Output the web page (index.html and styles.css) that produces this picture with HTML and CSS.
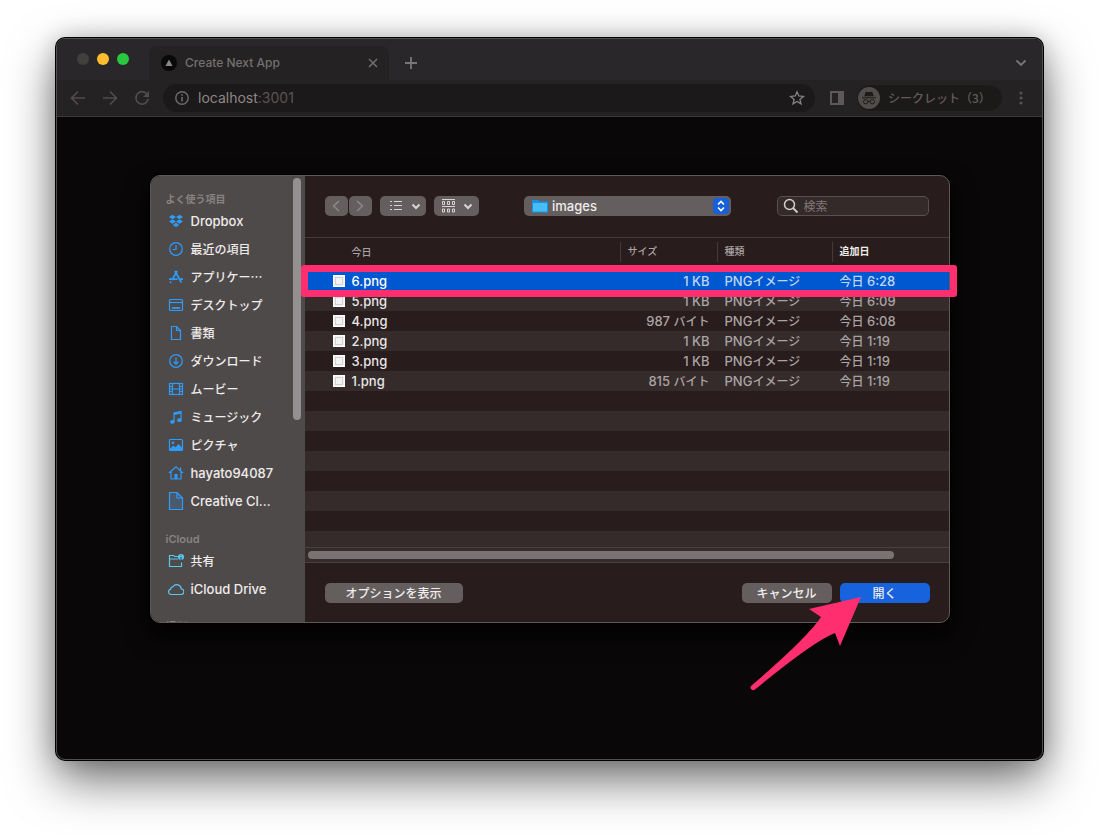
FILE: index.html
```
<!DOCTYPE html>
<html lang="ja">
<head>
<meta charset="utf-8">
<title>Create Next App</title>
<link rel="stylesheet" href="styles.css">
</head>
<body>
<div class="window">
  <header class="tabs">
    <div class="lights"><span class="light"></span><span class="light light-yellow"></span><span class="light light-green"></span></div>
    <div class="tab">
      <svg class="favicon" viewBox="0 0 16 16"><circle cx="8" cy="8" r="8" fill="#0a0909"/><path d="M8 4.500 11.500 11h-7z" fill="#8b8787"/></svg>
      <span class="tab-title">Create Next App</span>
      <button class="plain tab-close" aria-label="閉じる"><svg width="10" height="10" viewBox="0 0 10 10"><path d="M1 1l8 8M9 1 1 9" stroke="#757070" stroke-width="1.500"/></svg></button>
    </div>
    <button class="plain tab-new" aria-label="新しいタブ"><svg width="14" height="14" viewBox="0 0 14 14"><path d="M7 1v12M1 7h12" stroke="#7b7676" stroke-width="1.800"/></svg></button>
    <button class="plain tab-search" aria-label="タブを検索"><svg width="12" height="8" viewBox="0 0 12 8"><path d="M1.500 1.500 6 6l4.500-4.500" fill="none" stroke="#7b7676" stroke-width="1.800"/></svg></button>
  </header>
  <nav class="toolbar">
    <button class="plain tool" aria-label="戻る"><svg width="16" height="16" viewBox="0 0 16 16"><path d="M15 8H2M8 1.500 1.500 8 8 14.500" fill="none" stroke="#544b4b" stroke-width="1.700"/></svg></button>
    <button class="plain tool" aria-label="進む"><svg width="16" height="16" viewBox="0 0 16 16"><path d="M1 8h13M8 1.500 14.500 8 8 14.500" fill="none" stroke="#544b4b" stroke-width="1.700"/></svg></button>
    <button class="plain tool" aria-label="再読み込み"><svg width="16" height="16" viewBox="0 0 16 16"><path d="M13.300 4.500A6.200 6.200 0 1 0 14.200 9" fill="none" stroke="#544b4b" stroke-width="1.700"/><path d="M15 1v6H9z" fill="#544b4b"/></svg></button>
    <div class="address">
      <svg width="14" height="14" viewBox="0 0 14 14"><circle cx="7" cy="7" r="6.200" fill="none" stroke="#706b6b" stroke-width="1.400"/><path d="M7 6v4.500M7 3.300v1.500" stroke="#706b6b" stroke-width="1.600"/></svg>
      <span class="url">localhost<span class="port">:3001</span></span>
      <button class="plain star" aria-label="ブックマーク"><svg width="16" height="16" viewBox="0 0 16 16"><path d="M8 1.800l1.800 4.200 4.600.4-3.500 3 1.100 4.500L8 11.500l-4 2.400 1.100-4.500-3.500-3 4.600-.4z" fill="none" stroke="#8b8282" stroke-width="1.300"/></svg></button>
    </div>
    <button class="plain tool panel" aria-label="サイドパネル"><svg width="16" height="14" viewBox="0 0 16 14"><path d="M1 0h14v14H1zM3 2v10h6V2z" fill="#5e5959" fill-rule="evenodd"/></svg></button>
    <button class="incognito">
      <svg width="22" height="22" viewBox="0 0 22 22"><circle cx="11" cy="11" r="11" fill="#504d4a"/><path d="M7.500 5.200 8.300 4.800 11 5.300l2.700-.5.8.400 1.200 4H6.300zM4 10.300h14v1H4z" fill="#1d1a1a"/><g fill="none" stroke="#1d1a1a"><circle cx="7.700" cy="14.700" r="2.200"/><circle cx="14.300" cy="14.700" r="2.200"/><path d="M9.900 14.500q1.100-.6 2.200 0"/></g></svg>
      <span class="ja">シークレット（3）</span>
    </button>
    <button class="plain more" aria-label="メニュー"><svg width="4" height="14" viewBox="0 0 4 14" fill="#5a5151"><circle cx="2" cy="2" r="1.600"/><circle cx="2" cy="7" r="1.600"/><circle cx="2" cy="12" r="1.600"/></svg></button>
  </nav>
  <main class="page">
    <div class="dialog-wrap">
    <section class="dialog">
      <aside class="sidebar">
        <h2 class="heading">よく使う項目</h2>
        <a class="place" href="#"><svg viewBox="0 0 16 16"><path d="M4.500 1.800 8 4 4.500 6.300 1 4zM11.500 1.800 15 4l-3.500 2.300L8 4zM4.500 6.300 8 8.500l-3.500 2.300L1 8.500zM11.500 6.300 15 8.500l-3.500 2.300L8 8.500zM8 9.700l3.300 2.200L8 14l-3.300-2.100z" fill="#2d9cff"/></svg>Dropbox</a>
        <a class="place ja" href="#"><svg viewBox="0 0 16 16"><circle cx="8" cy="8" r="6.300"/><path d="M8 4v4.500H4.500"/></svg>最近の項目</a>
        <a class="place ja" href="#"><svg viewBox="0 0 16 16"><path d="M9.200 2 4 11.200M6.800 2l6.600 11.700M1 10.200h8.500M12 10.200h3M3 12.500l-.8 1.400" stroke-width="1.700"/></svg>アプリケー…</a>
        <a class="place ja" href="#"><svg viewBox="0 0 16 16"><rect x="1.500" y="2.500" width="13" height="11" rx="1"/><path d="M2 5.500h12"/><path d="M4 11h8" stroke-width="1.800"/></svg>デスクトップ</a>
        <a class="place ja" href="#"><svg viewBox="0 0 16 16"><path d="M3.500 1.500h5l4 4v9h-9zM8.500 1.500v4h4"/></svg>書類</a>
        <a class="place ja" href="#"><svg viewBox="0 0 16 16"><circle cx="8" cy="8" r="6.300"/><path d="M8 4.500v6.500M5.500 8.700 8 11.200l2.500-2.500"/></svg>ダウンロード</a>
        <a class="place ja" href="#"><svg viewBox="0 0 16 16"><rect x="1.500" y="2.500" width="13" height="11"/><path d="M4.500 2.500v11M11.500 2.500v11M4.500 8h7M1.500 5.500h3M1.500 8h3M1.500 10.500h3M11.500 5.500h3M11.500 8h3M11.500 10.500h3"/></svg>ムービー</a>
        <a class="place ja" href="#"><svg viewBox="0 0 16 16"><path d="M6 12.500V4l7-1.500v8.500"/><path d="M6 5l7-1.500" stroke-width="2.200"/><g fill="#2d9cff" stroke="none"><ellipse cx="4.400" cy="12.800" rx="2.300" ry="1.900"/><ellipse cx="11.400" cy="11.200" rx="2.300" ry="1.900"/></g></svg>ミュージック</a>
        <a class="place ja" href="#"><svg viewBox="0 0 16 16"><rect x="1.500" y="2.500" width="13" height="11" rx="1"/><path d="M2 11.500l3.500-3 2 1.800 3-3.300L14 10.500V13H2z" fill="#2d9cff" stroke="none"/><circle cx="5" cy="5.800" r="1.400" fill="#2d9cff" stroke="none"/></svg>ピクチャ</a>
        <a class="place" href="#"><svg viewBox="0 0 16 16"><path d="M1 8 8 1.800 15 8M3 7v7h10V7M12.500 2.500v3"/><path d="M6.500 9h3v5h-3z" fill="#2d9cff"/></svg>hayato94087</a>
        <a class="place" href="#"><svg class="tall" viewBox="0 0 16 18"><path d="M1.500.5H9L14.500 6v11.500h-13z" fill="#4a5a6d"/><path d="M9 .5V6h5.500"/></svg>Creative Cl...</a>
        <h2 class="heading heading-next">iCloud</h2>
        <a class="place ja cyan" href="#"><svg viewBox="0 0 16 16"><path d="M10 3.500H7L5.500 2.500h-4v11h12v-4M1.500 6h8.500"/><circle cx="13" cy="4" r="3" fill="#58c8f0" stroke="none"/><path d="M13 2.500v.8M13 4v3.500" stroke="#35566a"/></svg>共有</a>
        <a class="place cyan" href="#"><svg viewBox="0 0 16 16"><path d="M3.500 13.500H13a2.700 2.700 0 0 0 .3-5.500A4.500 4.500 0 0 0 5 5.800 2.400 2.400 0 0 0 2.600 8.200 2.700 2.700 0 0 0 3.500 13.500z"/></svg>iCloud Drive</a>
        <h2 class="heading heading-next">場所</h2>
        <span class="side-thumb"></span>
      </aside>
      <div class="browser">
        <div class="controls">
          <div class="control-group">
            <div class="arrows">
              <button class="push arrow-btn" aria-label="前"><svg width="8" height="12" viewBox="0 0 8 12"><path d="M7 1 1.500 6 7 11"/></svg></button>
              <button class="push arrow-btn" aria-label="次"><svg width="8" height="12" viewBox="0 0 8 12"><path d="m1 1 5.500 5L1 11"/></svg></button>
            </div>
            <button class="push view-btn" aria-label="リスト表示"><svg width="34" height="14" viewBox="0 0 34 14" fill="none" stroke="#d8d4d4"><path d="M4 2.500h2M4 6.500h2M4 10.500h2M8 2.500h8M8 6.500h8M8 10.500h8"/><path d="m26.500 5.500 3.500 3.500 3.500-3.500" stroke-width="2"/></svg></button>
            <button class="push view-btn view-group" aria-label="グループ"><svg width="34" height="14" viewBox="0 0 34 14" fill="none" stroke="#d8d4d4"><path d="M3 .5h13M3 7.500h13M3.500 2.500h2v3h-2zM8.500 2.500h2v3h-2zM13.500 2.500h2v3h-2zM3.500 10h2v3h-2zM8.500 10h2v3h-2zM13.500 10h2v3h-2z"/><path d="m25.500 5.500 3.500 3.500 3.500-3.500" stroke-width="2"/></svg></button>
          </div>
          <label class="folder">
            <svg class="folder-icon" width="16" height="14" viewBox="0 0 16 14"><path d="M0 1h6l1.500 1.500H16V13.500H0z" fill="#1c91e0"/><path d="M1 4h14v8.500H1z" fill="#46bdf6"/></svg>
            <select class="push folder-select" aria-label="フォルダ"><option>images</option></select>
            <svg class="folder-step" width="16" height="16" viewBox="0 0 16 16"><rect width="16" height="16" rx="4" fill="#1660dc"/><path d="m5 6.500 3-3 3 3M5 9.500l3 3 3-3" fill="none" stroke="#fff" stroke-width="1.600"/></svg>
          </label>
          <label class="search">
            <svg width="16" height="16" viewBox="0 0 16 16"><circle cx="6.500" cy="6.500" r="5" fill="none" stroke="#d2cece" stroke-width="1.500"/><path d="m10 10 4.500 4.500" stroke="#d2cece" stroke-width="1.800"/></svg>
            <input class="search-input ja" type="text" placeholder="検索" aria-label="検索">
          </label>
        </div>
        <div class="list">
          <table class="files">
            <colgroup><col><col class="col-size"><col class="col-kind"><col class="col-date"></colgroup>
            <thead><tr><th class="name-head"><span>今日</span></th><th><span class="split">サイズ</span></th><th><span class="split">種類</span></th><th><span class="split sorted">追加日</span></th></tr></thead>
            <tbody>
              <tr class="selected"><td class="name"><span class="thumb"></span>6.png</td><td class="size">1 KB</td><td>PNG<span class="ja">イメージ</span></td><td><span class="ja">今日</span> 6:28</td></tr>
              <tr><td class="name"><span class="thumb"></span>5.png</td><td class="size">1 KB</td><td>PNG<span class="ja">イメージ</span></td><td><span class="ja">今日</span> 6:09</td></tr>
              <tr><td class="name"><span class="thumb"></span>4.png</td><td class="size">987 <span class="ja">バイト</span></td><td>PNG<span class="ja">イメージ</span></td><td><span class="ja">今日</span> 6:08</td></tr>
              <tr><td class="name"><span class="thumb"></span>2.png</td><td class="size">1 KB</td><td>PNG<span class="ja">イメージ</span></td><td><span class="ja">今日</span> 1:19</td></tr>
              <tr><td class="name"><span class="thumb"></span>3.png</td><td class="size">1 KB</td><td>PNG<span class="ja">イメージ</span></td><td><span class="ja">今日</span> 1:19</td></tr>
              <tr><td class="name"><span class="thumb"></span>1.png</td><td class="size">815 <span class="ja">バイト</span></td><td>PNG<span class="ja">イメージ</span></td><td><span class="ja">今日</span> 1:19</td></tr>
            </tbody>
          </table>
        </div>
        <div class="track"><div class="track-thumb"></div></div>
        <footer class="actions">
          <button class="push action options ja">オプションを表示</button>
          <button class="push action ja">キャンセル</button>
          <button class="push action open ja">開く</button>
        </footer>
      </div>
    </section>
    <div class="highlight"></div>
    <svg class="pointer" width="112" height="96" viewBox="0 0 112 96"><path d="M111 2 59 14 71 22Q58 42 1.500 90.500A2.200 2.200 0 0 0 5 94.500Q64 46 85 38L90 51z" fill="#ff2e6e"/></svg>
    </div>
  </main>
</div>
</body>
</html>
```
FILE: styles.css
```
* { box-sizing: border-box; }
body {
  margin: 0;
  min-height: 100vh;
  padding: 38px 56px 74px;
  display: flex;
  background: #fff;
  font-family: Inter, "Noto Sans CJK JP", sans-serif;
  font-size: 13px;
  line-height: 20px;
}
button, input, select { font: inherit; color: inherit; margin: 0; }
svg { flex: none; display: block; }
.ja, .ja.action { font-family: "Noto Sans CJK JP", sans-serif; font-size: 12px; }
.window {
  flex: 1;
  min-width: 0;
  display: flex;
  flex-direction: column;
  border: 1px solid #504e4e;
  border-radius: 9px;
  background: #090708;
  box-shadow: 0 0 0 1px #000, 0 20px 48px rgba(0, 0, 0, .56), 0 0 24px rgba(0, 0, 0, .2);
}
.plain {
  display: flex;
  align-items: center;
  justify-content: center;
  padding: 0;
  border: 0;
  background: none;
}
.tabs {
  display: flex;
  align-items: flex-end;
  height: 41px;
  padding: 0 11px 0 20px;
  border-radius: 8px 8px 0 0;
  background: #29272a;
}
.lights { display: flex; gap: 8px; align-self: flex-start; margin: 14px 20px 0 0; }
.light { width: 12px; height: 12px; border-radius: 50%; background: #423f3c; }
.light-yellow { background: #ffbd2e; }
.light-green { background: #28c840; }
.tab {
  width: 240px;
  height: 34px;
  padding: 0 10px 0 12px;
  display: flex;
  align-items: center;
  gap: 8px;
  border-radius: 8px 8px 0 0;
  background: #242222;
}
.favicon { width: 16px; height: 16px; }
.tab-title { flex: 1; font-size: 12px; font-weight: 500; color: #767070; }
.tab-close { width: 12px; height: 20px; }
.tab-new { width: 20px; height: 34px; margin-left: 12px; }
.tab-search { width: 20px; height: 34px; margin-left: auto; }
.toolbar {
  display: flex;
  align-items: center;
  height: 37px;
  padding: 0 9px 0 5px;
  border-bottom: 1px solid #3b3939;
  background: #242222;
}
.tool { width: 32px; height: 28px; }
.panel { margin: 0 3px 0 6px; }
.address {
  flex: 1;
  height: 28px;
  margin-left: 5px;
  padding: 0 10px 0 12px;
  display: flex;
  align-items: center;
  gap: 9px;
  border-radius: 14px;
  background: #1b1919;
}
.url { flex: 1; font-size: 14px; color: #8f8888; }
.port { color: #5b5454; }
.star { width: 16px; height: 20px; }
.incognito {
  width: 147px;
  height: 28px;
  padding: 0 1px;
  display: flex;
  align-items: center;
  gap: 8px;
  border: 1px solid #292323;
  border-radius: 14px;
  background: #1c1919;
  color: #625b5b;
  font-weight: 500;
  white-space: nowrap;
}
.more { width: 24px; height: 28px; margin-left: 6px; }
.page { flex: 1; padding: 58px 24px; }
.dialog-wrap { position: relative; max-width: 800px; margin: 0 auto; }
.dialog {
  display: flex;
  overflow: hidden;
  border: 1px solid #5f5959;
  border-radius: 10px;
  background: #281c1c;
  color: #e4e0e0;
  box-shadow: 0 0 0 1px #000, 0 12px 24px #020101;
}
.sidebar {
  position: relative;
  width: 154px;
  height: 0;
  min-height: 446px;
  padding: 15px 12px 0 15px;
  overflow: hidden;
  background: #4f4a4a;
}
.heading { margin: 0; font-size: 10px; line-height: 16px; font-weight: 600; color: #878282; }
.heading-next { padding-top: 16px; font-size: 11px; }
.place {
  display: flex;
  align-items: center;
  gap: 7px;
  height: 28px;
  padding-left: 2px;
  color: #efecec;
  font-weight: 500;
  text-decoration: none;
  white-space: nowrap;
}
.place svg { width: 16px; height: 16px; fill: none; stroke: #2d9cff; stroke-width: 1.200; }
.place .tall { height: 18px; }
.place svg path[fill="#2d9cff"] { stroke: none; }
.place.cyan svg { stroke: #58c8f0; }
.side-thumb {
  position: absolute;
  top: 2px;
  right: 4px;
  width: 8px;
  height: 242px;
  border-radius: 4px;
  background: #929090;
}
.browser { flex: 1; min-width: 0; display: flex; flex-direction: column; }
.controls {
  display: flex;
  justify-content: space-between;
  padding: 20px 20px 21px;
  border-bottom: 1px solid #443a3a;
}
.control-group { display: flex; gap: 8px; }
.arrows { display: flex; gap: 1px; }
.push {
  height: 20px;
  padding: 0;
  display: flex;
  align-items: center;
  justify-content: center;
  border: 0;
  border-radius: 5px;
  background: #655e5e;
  color: #f0eded;
}
.arrow-btn { width: 23px; }
.arrow-btn svg { fill: none; stroke: #8f8888; stroke-width: 1.500; }
.view-btn { width: 46px; }
.view-group { width: 45px; }
.folder { position: relative; width: 207px; }
.folder-select { width: 100%; padding-left: 28px; appearance: none; font-weight: 500; }
.folder-icon { position: absolute; left: 8px; top: 3px; }
.folder-step { position: absolute; right: 2px; top: 2px; }
.search {
  width: 152px;
  height: 20px;
  padding: 0 5px;
  display: flex;
  align-items: center;
  gap: 5px;
  border: 1px solid #5a5050;
  border-radius: 5px;
  background: #352a2a;
}
.search-input { flex: 1; min-width: 0; height: 18px; padding: 0; border: 0; background: none; }
.search-input::placeholder { color: #817878; }
.list {
  height: 309px;
  background: linear-gradient(#281c1c 33px, transparent 33px), repeating-linear-gradient(#281c1c 0 20px, #352b2b 20px 40px) 0 33px;
}
.files { width: 100%; table-layout: fixed; border-collapse: collapse; }
.col-size { width: 97px; }
.col-kind { width: 115px; }
.col-date { width: 117px; }
.files th {
  height: 33px;
  padding: 4px 0 9px;
  text-align: left;
  font-family: "Noto Sans CJK JP", sans-serif;
  font-size: 10px;
  font-weight: 500;
  line-height: 18px;
  color: #aaa3a3;
}
.files .name-head { padding-left: 47px; }
.split { display: block; height: 20px; padding-left: 7px; border-left: 1px solid #443a3a; }
.sorted { font-weight: 700; color: #efecec; }
.files td { height: 20px; padding: 0 0 0 8px; line-height: 20px; font-weight: 500; color: #aaa4a4; white-space: nowrap; }
.files td .ja { line-height: 16px; }
.files .size { padding: 0 7px 0 0; text-align: right; }
.files .name { padding-left: 28px; color: #e9e6e6; }
.thumb {
  display: inline-block;
  width: 12px;
  height: 12px;
  margin-right: 7px;
  border: 1px solid #fff;
  outline: 1px solid #d3d1d1;
  outline-offset: -3px;
  background: #f4f3f3;
  vertical-align: -1px;
}
.files .selected { background: #0058d0; }
.files .selected td { color: #bed5f5; }
.files .selected .name { color: #fff; }
.track { height: 16px; padding: 3px; border: solid #4a4040; border-width: 1px 0; background: #352b2b; }
.track-thumb { width: 92%; height: 8px; border-radius: 4px; background: #7b7373; }
.actions { display: flex; gap: 8px; padding: 20px 19px 19px 20px; }
.action { width: 90px; font-weight: 500; }
.options { width: 138px; margin-right: auto; }
.open { background: #1762dd; }
.highlight {
  position: absolute;
  top: 90px;
  left: 151px;
  right: -7px;
  height: 32px;
  border: 7px solid #ff2e6e;
  border-radius: 3px;
}
.pointer { position: absolute; right: 88px; bottom: -68px; }
```
